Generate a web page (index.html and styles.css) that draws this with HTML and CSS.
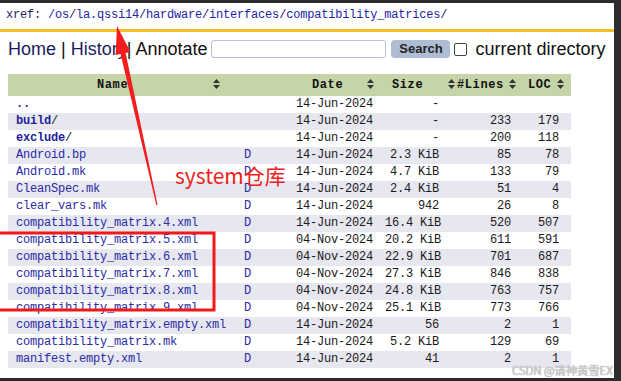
FILE: index.html
```html
<!DOCTYPE html>
<html lang="en">
<head>
<meta charset="utf-8">
<title>xref: /os/la.qssi14/hardware/interfaces/compatibility_matrices/</title>
<link rel="stylesheet" href="styles.css">
</head>
<body>
<div class="page">
  <div class="xref">xref: <a href="#">/os</a>/<a href="#">la.qssi14</a>/<a href="#">hardware</a>/<a href="#">interfaces</a>/<a href="#">compatibility_matrices</a>/</div>
  <div class="bar"></div>
  <div class="nav">
    <span class="navlinks"><a href="#" class="navlink">Home</a> | <a href="#" class="navlink">History</a>| <span class="navplain">Annotate</span></span>
    <input class="q" type="text">
    <button class="btn">Search</button>
    <input class="chk" type="checkbox">
    <span class="cur">current directory</span>
  </div>
  <table class="dir">
    <colgroup>
      <col class="c-name"><col class="c-d"><col class="c-date"><col class="c-size"><col class="c-lines"><col class="c-loc">
    </colgroup>
    <thead>
      <tr>
        <th class="h-name"><span>Name</span><svg class="sort s-name" viewBox="0 0 7 10"><path d="M0 4L3.5 0L7 4Z M0 6L3.5 10L7 6Z"/></svg></th>
        <th></th>
        <th class="h-date"><span>Date</span><svg class="sort s-date" viewBox="0 0 7 10"><path d="M0 4L3.5 0L7 4Z M0 6L3.5 10L7 6Z"/></svg></th>
        <th class="h-size"><span>Size</span><svg class="sort s-size" viewBox="0 0 7 10"><path d="M0 4L3.5 0L7 4Z M0 6L3.5 10L7 6Z"/></svg></th>
        <th class="h-lines"><span>#Lines</span><svg class="sort s-lines" viewBox="0 0 7 10"><path d="M0 4L3.5 0L7 4Z M0 6L3.5 10L7 6Z"/></svg></th>
        <th class="h-loc"><span>LOC</span><svg class="sort s-loc" viewBox="0 0 7 10"><path d="M0 4L3.5 0L7 4Z M0 6L3.5 10L7 6Z"/></svg></th>
      </tr>
    </thead>
    <tbody>
      <tr><td class="name"><a class="dirl" href="#">..</a></td><td></td><td class="date">14-Jun-2024</td><td class="num size">-</td><td class="num lines"></td><td class="num loc"></td></tr>
      <tr><td class="name"><a class="dirl" href="#">build</a>/</td><td></td><td class="date">14-Jun-2024</td><td class="num size">-</td><td class="num lines">233</td><td class="num loc">179</td></tr>
      <tr><td class="name"><a class="dirl" href="#">exclude</a>/</td><td></td><td class="date">14-Jun-2024</td><td class="num size">-</td><td class="num lines">200</td><td class="num loc">118</td></tr>
      <tr><td class="name"><a href="#">Android.bp</a></td><td class="d"><a href="#">D</a></td><td class="date">14-Jun-2024</td><td class="num size">2.3 KiB</td><td class="num lines">85</td><td class="num loc">78</td></tr>
      <tr><td class="name"><a href="#">Android.mk</a></td><td class="d"><a href="#">D</a></td><td class="date">14-Jun-2024</td><td class="num size">4.7 KiB</td><td class="num lines">133</td><td class="num loc">79</td></tr>
      <tr><td class="name"><a href="#">CleanSpec.mk</a></td><td class="d"><a href="#">D</a></td><td class="date">14-Jun-2024</td><td class="num size">2.4 KiB</td><td class="num lines">51</td><td class="num loc">4</td></tr>
      <tr><td class="name"><a href="#">clear_vars.mk</a></td><td class="d"><a href="#">D</a></td><td class="date">14-Jun-2024</td><td class="num size">942</td><td class="num lines">26</td><td class="num loc">8</td></tr>
      <tr><td class="name"><a href="#">compatibility_matrix.4.xml</a></td><td class="d"><a href="#">D</a></td><td class="date">14-Jun-2024</td><td class="num size">16.4 KiB</td><td class="num lines">520</td><td class="num loc">507</td></tr>
      <tr><td class="name"><a href="#">compatibility_matrix.5.xml</a></td><td class="d"><a href="#">D</a></td><td class="date">04-Nov-2024</td><td class="num size">20.2 KiB</td><td class="num lines">611</td><td class="num loc">591</td></tr>
      <tr><td class="name"><a href="#">compatibility_matrix.6.xml</a></td><td class="d"><a href="#">D</a></td><td class="date">04-Nov-2024</td><td class="num size">22.9 KiB</td><td class="num lines">701</td><td class="num loc">687</td></tr>
      <tr><td class="name"><a href="#">compatibility_matrix.7.xml</a></td><td class="d"><a href="#">D</a></td><td class="date">04-Nov-2024</td><td class="num size">27.3 KiB</td><td class="num lines">846</td><td class="num loc">838</td></tr>
      <tr><td class="name"><a href="#">compatibility_matrix.8.xml</a></td><td class="d"><a href="#">D</a></td><td class="date">04-Nov-2024</td><td class="num size">24.8 KiB</td><td class="num lines">763</td><td class="num loc">757</td></tr>
      <tr><td class="name"><a href="#">compatibility_matrix.9.xml</a></td><td class="d"><a href="#">D</a></td><td class="date">04-Nov-2024</td><td class="num size">25.1 KiB</td><td class="num lines">773</td><td class="num loc">766</td></tr>
      <tr><td class="name"><a href="#">compatibility_matrix.empty.xml</a></td><td class="d"><a href="#">D</a></td><td class="date">14-Jun-2024</td><td class="num size">56</td><td class="num lines">2</td><td class="num loc">1</td></tr>
      <tr><td class="name"><a href="#">compatibility_matrix.mk</a></td><td class="d"><a href="#">D</a></td><td class="date">14-Jun-2024</td><td class="num size">5.2 KiB</td><td class="num lines">129</td><td class="num loc">69</td></tr>
      <tr><td class="name"><a href="#">manifest.empty.xml</a></td><td class="d"><a href="#">D</a></td><td class="date">14-Jun-2024</td><td class="num size">41</td><td class="num lines">2</td><td class="num loc">1</td></tr>
    </tbody>
  </table>
</div>
<div class="overlay">
  <svg class="marks" viewBox="0 0 621 381" width="621" height="381">
    <polygon class="arrow" points="117,26 130.5,52 125.6,53 157.6,205 156.4,205.2 120.6,54 115.6,55"/>
    <rect class="box" x="-5" y="233" width="219" height="77"/>
  </svg>
  <div class="note">system仓库</div>
  <div class="wm">CSDN @请神黄雪EX</div>
</div>
</body>
</html>
```
FILE: styles.css
```css
html, body {
  margin: 0;
  padding: 0;
}
body {
  background: #2c2c2c;
  width: 621px;
  height: 381px;
  overflow: hidden;
  position: relative;
}
.page {
  margin-top: 3px;
  width: 614px;
  height: 375px;
  background: #ffffff;
  overflow: hidden;
}
.xref {
  font-family: "Liberation Mono", monospace;
  font-size: 12px;
  letter-spacing: -0.2px;
  line-height: 17px;
  padding: 4px 0 5px 6px;
  color: #222266;
  white-space: nowrap;
}
.xref a {
  color: #2323a6;
  text-decoration: none;
}
.bar {
  height: 3px;
  background: #f6c025;
}
.nav {
  display: flex;
  align-items: center;
  height: 20px;
  margin-top: 7px;
  padding-left: 8px;
  font-family: "Liberation Sans", Arial, sans-serif;
  font-size: 18px;
  line-height: 20px;
  color: #111;
  white-space: nowrap;
}
.navlink {
  color: #1c1c5c;
  text-decoration: none;
}
.navplain {
  color: #111;
}
.q {
  box-sizing: border-box;
  width: 175px;
  height: 18px;
  margin: 0 0 0 4px;
  border: 1px solid #bcbcee;
  border-radius: 3px;
  background: #fff;
  padding: 0;
}
.btn {
  box-sizing: border-box;
  width: 59px;
  height: 18px;
  margin-left: 5px;
  padding: 0;
  border: none;
  border-radius: 4px;
  background: #aebdd3;
  font-family: "Liberation Sans", Arial, sans-serif;
  font-weight: bold;
  font-size: 13px;
  line-height: 18px;
  color: #222;
}
.chk {
  appearance: none;
  -webkit-appearance: none;
  box-sizing: border-box;
  width: 13px;
  height: 13px;
  margin: 0 0 0 4px;
  border: 1px solid #444;
  border-radius: 2px;
  background: #fff;
}
.cur {
  margin-left: 8px;
  color: #111;
}
.dir {
  margin: 15px 0 0 8px;
  width: 563px;
  table-layout: fixed;
  border-collapse: collapse;
  font-family: "Liberation Mono", monospace;
  font-size: 12px;
  letter-spacing: -0.2px;
  color: #1a1a1a;
}
.c-name { width: 227px; }
.c-d { width: 45px; }
.c-date { width: 105px; }
.c-size { width: 70px; }
.c-lines { width: 64px; }
.c-loc { width: 52px; }
.dir thead tr {
  background: #c5d5a9;
  height: 22px;
}
.dir th {
  padding: 0;
  text-align: left;
  font-weight: bold;
  letter-spacing: 0.6px;
  color: #111;
  white-space: nowrap;
  line-height: 22px;
  overflow: hidden;
}
.sort {
  width: 7px;
  height: 10px;
  vertical-align: -1px;
  fill: #333;
}
.h-name { padding-left: 89px !important; }
.s-name { margin-left: 85px; }
.h-date { padding-left: 32px !important; }
.s-date { margin-left: 24px; }
.h-size { padding-left: 7px !important; }
.s-size { margin-left: 25px; }
.h-lines { padding-left: 2px !important; }
.s-lines { margin-left: 5px; }
.h-loc { padding-left: 9px !important; }
.s-loc { margin-left: 6px; }
.dir tbody tr {
  height: 17px;
}
.dir tbody tr:nth-child(even) {
  background: #e7e7f0;
}
.dir td {
  padding: 0;
  line-height: 17px;
  white-space: nowrap;
  overflow: hidden;
}
.dir td a {
  color: #2a2aa6;
  text-decoration: none;
}
.dir td a.dirl {
  font-weight: bold;
  color: #1f1f9e;
}
.name { padding-left: 8px !important; }
.d { padding-left: 9px !important; }
.date { padding-left: 16px !important; }
.num { text-align: right; }
.size { padding-right: 16px !important; }
.lines { padding-right: 8px !important; }
.loc { padding-right: 12px !important; }
.overlay {
  position: absolute;
  left: 0;
  top: 0;
  width: 621px;
  height: 381px;
  pointer-events: none;
}
.marks {
  position: absolute;
  left: 0;
  top: 0;
}
.arrow {
  fill: #f21d1d;
}
.box {
  fill: none;
  stroke: #f01818;
  stroke-width: 3;
}
.note {
  position: absolute;
  left: 175px;
  top: 162px;
  font-family: "Noto Sans CJK SC", "Noto Sans", sans-serif;
  font-size: 21px;
  line-height: 26px;
  color: #ee2222;
  white-space: nowrap;
}
.wm {
  position: absolute;
  left: 512px;
  top: 362px;
  font-family: "Noto Sans CJK SC", sans-serif;
  font-size: 11.5px;
  line-height: 16px;
  color: #d0d0d0;
  letter-spacing: -0.2px;
  white-space: nowrap;
  text-shadow: 0 0 1px #888;
}
```
